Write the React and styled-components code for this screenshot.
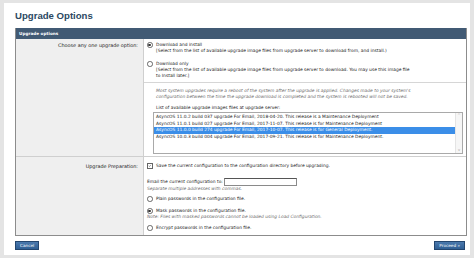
import styled, { createGlobalStyle } from "styled-components";

const Global = createGlobalStyle`
  html, body {
    margin: 0;
    padding: 0;
    background: #e4e4e4;
  }
  body {
    font-family: "DejaVu Sans", Verdana, sans-serif;
    font-size: 4.4px;
    line-height: 6px;
    color: #222;
  }
`;

const Page = styled.div`
  width: 474px;
  height: 258px;
  box-sizing: border-box;
  padding: 3px 4px 3px 4px;
`;

const Panel = styled.div`
  background: #fff;
  height: 252px;
  box-sizing: border-box;
  padding: 0 3px 0 11px;
  display: flex;
  flex-direction: column;
`;

const Title = styled.h1`
  margin: 0;
  height: 25px;
  padding-top: 8px;
  box-sizing: border-box;
  font-family: "Liberation Sans", Arial, sans-serif;
  font-size: 9.6px;
  line-height: 10px;
  font-weight: 700;
  color: #2b4862;
`;

const Table = styled.div`
  border: 1px solid #8c8c8c;
  border-top: none;
  display: grid;
  grid-template-columns: 128px 1fr;
`;

const HeaderBar = styled.div`
  grid-column: 1 / -1;
  height: 11px;
  background: #415a74;
  color: #fff;
  font-weight: 700;
  font-size: 4.2px;
  line-height: 11px;
  padding-left: 3px;
`;

const LabelCell = styled.div`
  background: #efefef;
  border-right: 1px solid #cfcfcf;
  border-bottom: ${(p) => (p.last ? "none" : "1px solid #cfcfcf")};
  text-align: right;
  font-size: 4.9px;
  padding: ${(p) => p.top}px 5px 0 0;
  height: ${(p) => p.h}px;
  box-sizing: border-box;
`;

const ContentCell = styled.div`
  border-bottom: ${(p) => (p.last ? "none" : "1px solid #cfcfcf")};
  height: ${(p) => p.h}px;
  box-sizing: border-box;
  display: flex;
  flex-direction: column;
`;

const Section = styled.div`
  padding: ${(p) => p.pad || "0 3px"};
  border-bottom: ${(p) => (p.divider ? "1px solid #d6d6d6" : "none")};
`;

const Option = styled.div`
  display: flex;
  align-items: flex-start;
  margin-top: ${(p) => p.mt || 0}px;
`;

const Radio = styled.span`
  flex: none;
  width: 5.5px;
  height: 5.5px;
  margin: 0.3px 3.5px 0 0;
  border: 0.7px solid #666;
  border-radius: 50%;
  background: #fff;
  box-sizing: border-box;
  display: flex;
  align-items: center;
  justify-content: center;
  &::after {
    content: "";
    width: 2.6px;
    height: 2.6px;
    border-radius: 50%;
    background: ${(p) => (p.checked ? "#333" : "transparent")};
  }
`;

const Check = styled.span`
  flex: none;
  width: 5.5px;
  height: 5.5px;
  margin: 0.3px 3.5px 0 0;
  border: 0.7px solid #666;
  box-sizing: border-box;
  display: flex;
  svg {
    width: 100%;
    height: 100%;
  }
`;

const Hint = styled.div`
  color: ${(p) => (p.italic ? "#6f6f6f" : "#222")};
  font-style: ${(p) => (p.italic ? "italic" : "normal")};
  margin-top: ${(p) => p.mt || 0}px;
`;

const ListLabel = styled.div`
  margin: 5px 0 1px 0;
`;

const ListBox = styled.div`
  margin-left: 6px;
  height: 42px;
  border: 1px solid #a9a9a9;
  box-sizing: border-box;
  display: flex;
`;

const ListItems = styled.div`
  flex: 1;
  padding-top: 1px;
`;

const ListItem = styled.div`
  height: 6.6px;
  line-height: 6.6px;
  padding-left: 2px;
  white-space: nowrap;
  background: ${(p) => (p.selected ? "#3b8ee8" : "transparent")};
  color: ${(p) => (p.selected ? "#fff" : "#222")};
`;

const Scrollbar = styled.div`
  width: 6px;
  background: #f6f6f6;
  border-left: 1px solid #e4e4e4;
  display: flex;
  flex-direction: column;
  justify-content: space-between;
  align-items: center;
  color: #9a9a9a;
  font-size: 3.5px;
  line-height: 5px;
`;

const EmailRow = styled.div`
  display: flex;
  align-items: center;
  margin-top: 9px;
  gap: 1px;
`;

const TextInput = styled.div`
  width: 73px;
  height: 8px;
  border: 1px solid #8a8a8a;
  border-top-color: #555;
  box-sizing: border-box;
  background: #fff;
`;

const Footer = styled.div`
  display: flex;
  justify-content: space-between;
  padding: 5px 2px 0 0;
`;

const Button = styled.div`
  height: 9px;
  padding: 0 ${(p) => p.px || 4}px;
  background: linear-gradient(#4a79ad, #2f5f94);
  border: 1px solid #23466f;
  box-sizing: border-box;
  color: #fff;
  font-size: 4.2px;
  line-height: 7px;
`;

const images = [
  "AsyncOS 11.0.2 build 037 upgrade For Email, 2018-04-20. This release is a Maintenance Deployment",
  "AsyncOS 11.0.1 build 027 upgrade For Email, 2017-11-07. This release is for Maintenance Deployment",
  "AsyncOS 11.0.0 build 274 upgrade For Email, 2017-10-07. This release is for General Deployment.",
  "AsyncOS 10.0.3 build 004 upgrade For Email, 2017-09-21. This release is for Maintenance Deployment.",
];

export default function App() {
  return (
    <Page>
      <Global />
      <Panel>
        <Title>Upgrade Options</Title>
        <Table>
          <HeaderBar>Upgrade options</HeaderBar>

          <LabelCell h={118} top={3}>
            Choose any one upgrade option:
          </LabelCell>
          <ContentCell h={118}>
            <Section pad="3px 3px 3px 3px" divider>
              <Option>
                <Radio checked />
                <div>
                  <div>Download and install</div>
                  <div>
                    [Select from the list of available upgrade image files from
                    upgrade server to download from, and install.)
                  </div>
                </div>
              </Option>
              <Option mt={7}>
                <Radio />
                <div>
                  <div>Download only</div>
                  <div>
                    [Select from the list of available upgrade image files from
                    upgrade server to download. You may use this image file
                  </div>
                  <div>to Install later.]</div>
                </div>
              </Option>
            </Section>
            <Section pad="5px 3px 0 12px">
              <Hint italic>
                Most system upgrades require a reboot of the system after the
                upgrade is applied. Changes made to your system's
              </Hint>
              <Hint italic>
                configuration between the time the upgrade download is completed
                and the system is rebooted will not be saved.
              </Hint>
              <ListLabel>
                List of available upgrade images files at upgrade server:
              </ListLabel>
            </Section>
            <Section pad="0 3px 0 3px">
              <ListBox>
                <ListItems>
                  {images.map((t, i) => (
                    <ListItem key={t} selected={i === 2}>
                      {t}
                    </ListItem>
                  ))}
                </ListItems>
                <Scrollbar>
                  <span>^</span>
                  <span>v</span>
                </Scrollbar>
              </ListBox>
            </Section>
          </ContentCell>

          <LabelCell h={78} top={6} last>
            Upgrade Preparation:
          </LabelCell>
          <ContentCell h={78} last>
            <Section pad="6px 3px 0 3px">
              <Option>
                <Check>
                  <svg viewBox="0 0 10 10">
                    <path
                      d="M2 5.2 L4.2 7.4 L8.2 2.6"
                      fill="none"
                      stroke="#333"
                      strokeWidth="1.3"
                    />
                  </svg>
                </Check>
                <div>
                  Save the current configuration to the configuration directory
                  before upgrading.
                </div>
              </Option>
              <EmailRow>
                <span>Email the current configuration to:</span>
                <TextInput />
              </EmailRow>
              <Hint italic>Separate multiple addresses with commas.</Hint>
              <Option mt={4}>
                <Radio />
                <div>Plain passwords in the configuration file.</div>
              </Option>
              <Option mt={6}>
                <Radio checked />
                <div>Mask passwords in the configuration file.</div>
              </Option>
              <Hint italic>
                Note: Files with masked passwords cannot be loaded using Load
                Configuration.
              </Hint>
              <Option mt={5}>
                <Radio />
                <div>Encrypt passwords in the configuration file.</div>
              </Option>
            </Section>
          </ContentCell>
        </Table>
        <Footer>
          <Button px={4}>Cancel</Button>
          <Button px={4}>Proceed »</Button>
        </Footer>
      </Panel>
    </Page>
  );
}
